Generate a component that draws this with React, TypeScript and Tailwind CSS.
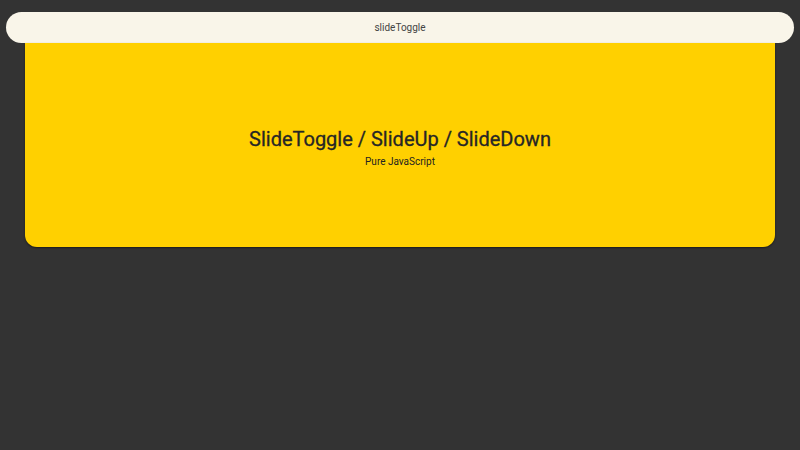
export default function App() {
  return (
    <div className="min-h-screen w-full bg-[#333333] pt-3" style={{ fontFamily: 'Roboto, "Liberation Sans", sans-serif' }}>
      {/* toggle button */}
      <div className="mx-[6px] flex h-[31px] items-center justify-center rounded-full bg-[#f9f5e9] text-[10px] text-[#444444]">
        slideToggle
      </div>

      {/* sliding panel */}
      <div className="mx-[25px] flex h-[204px] flex-col items-center justify-center rounded-b-[12px] bg-[#ffd000] pt-[5px] text-[#262626] shadow-[0_1px_2px_rgba(0,0,0,0.5)]">
        <h1 className="text-[20px] leading-[24px] font-normal [-webkit-text-stroke:0.3px_#262626]">SlideToggle / SlideUp / SlideDown</h1>
        <p className="mt-[4px] text-[10px] leading-[13px] text-[#222222]">Pure JavaScript</p>
      </div>
    </div>
  );
}
